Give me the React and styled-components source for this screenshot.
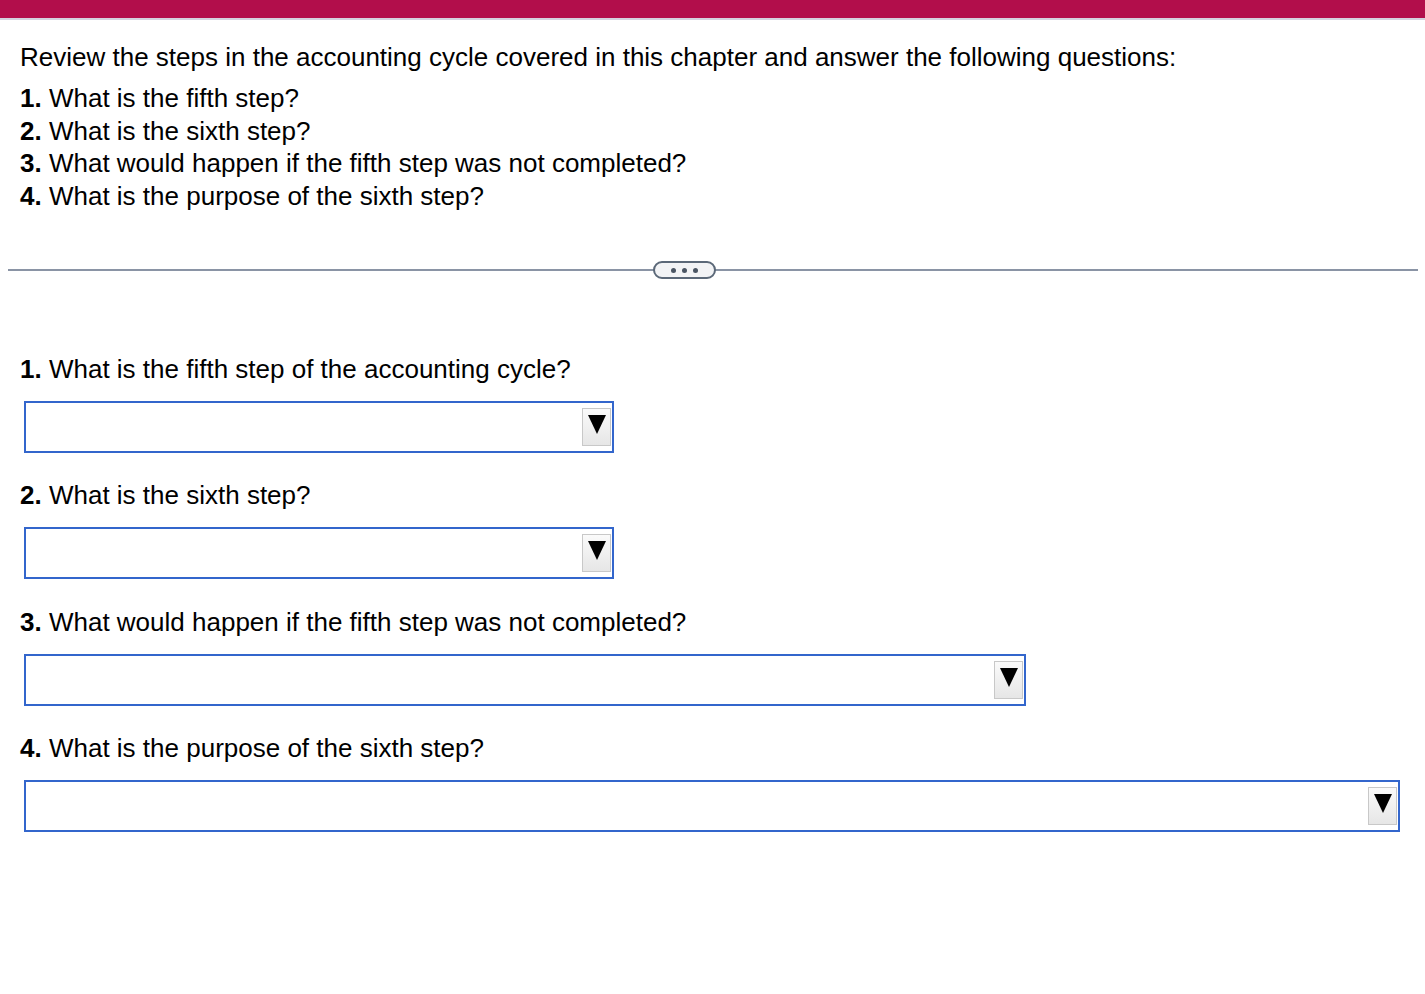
import React from 'react'
import styled, { createGlobalStyle } from 'styled-components'

const questions = [
  { n: 1, text: 'What is the fifth step?', full: 'What is the fifth step of the accounting cycle?', width: 590 },
  { n: 2, text: 'What is the sixth step?', full: 'What is the sixth step?', width: 590 },
  { n: 3, text: 'What would happen if the fifth step was not completed?', full: 'What would happen if the fifth step was not completed?', width: 1002 },
  { n: 4, text: 'What is the purpose of the sixth step?', full: 'What is the purpose of the sixth step?', width: 1376 },
]

export default () => {
  return (
    <>
      <GlobalStyle />
      <TopBar />
      <Page>
        <Intro>
          <Lead>Review the steps in the accounting cycle covered in this chapter and answer the following questions:</Lead>
          {questions.map(q => (
            <ListItem key={q.n}>
              <b>{q.n}.</b> {q.text}
            </ListItem>
          ))}
        </Intro>

        <Divider>
          <Pill>
            <Dot />
            <Dot />
            <Dot />
          </Pill>
        </Divider>

        <Answers>
          {questions.map(q => (
            <Question key={q.n}>
              <Label>
                <b>{q.n}.</b> {q.full}
              </Label>
              <Select $width={q.width}>
                <ArrowButton>
                  <svg width="20" height="20" viewBox="0 0 20 20">
                    <polygon points="1,1 19,1 10,20" fill="#000" />
                  </svg>
                </ArrowButton>
              </Select>
            </Question>
          ))}
        </Answers>
      </Page>
    </>
  )
}

const GlobalStyle = createGlobalStyle`
  body {
    margin: 0;
    background: #fff;
    font-family: 'Liberation Sans', Arial, sans-serif;
    color: #000;
  }
`

const TopBar = styled.div`
  height: 18px;
  background: #b20e4b;
  border-bottom: 2px solid #d4d2de;
`

const Page = styled.main`
  padding: 0 7px 0 8px;
`

const Intro = styled.section`
  padding: 22px 12px 0;
  font-size: 26px;
`

const Lead = styled.p`
  margin: 0 0 10px;
  line-height: 30px;
`

const ListItem = styled.div`
  line-height: 32.5px;

  b {
    font-weight: bold;
  }
`

const Divider = styled.div`
  margin-top: 57px;
  height: 2px;
  background: #8a94a5;
  position: relative;
`

const Pill = styled.div`
  position: absolute;
  left: 645px;
  top: -8px;
  width: 63px;
  height: 18px;
  box-sizing: border-box;
  border: 2px solid #5b6878;
  border-radius: 9px;
  background: #f2f3f5;
  display: flex;
  align-items: center;
  justify-content: center;
  gap: 6px;
`

const Dot = styled.span`
  width: 5px;
  height: 5px;
  border-radius: 50%;
  background: #4a5563;
`

const Answers = styled.section`
  padding: 83px 12px 0;
  display: flex;
  flex-direction: column;
  gap: 27.4px;
`

const Question = styled.div`
  display: flex;
  flex-direction: column;
  align-items: flex-start;
`

const Label = styled.div`
  font-size: 26px;
  line-height: 30px;
  margin-bottom: 17px;
`

const Select = styled.div`
  margin-left: 4px;
  width: ${p => p.$width}px;
  height: 52px;
  box-sizing: border-box;
  border: 2px solid #3366cc;
  background: #fff;
  display: flex;
  align-items: center;
  justify-content: flex-end;
  padding-right: 1px;
`

const ArrowButton = styled.div`
  width: 29px;
  height: 38px;
  box-sizing: border-box;
  border: 1px solid #c8c8c8;
  background: linear-gradient(to bottom, #fafafa, #e6e6e6);
  display: flex;
  align-items: center;
  justify-content: center;
  padding-bottom: 6px;
`
